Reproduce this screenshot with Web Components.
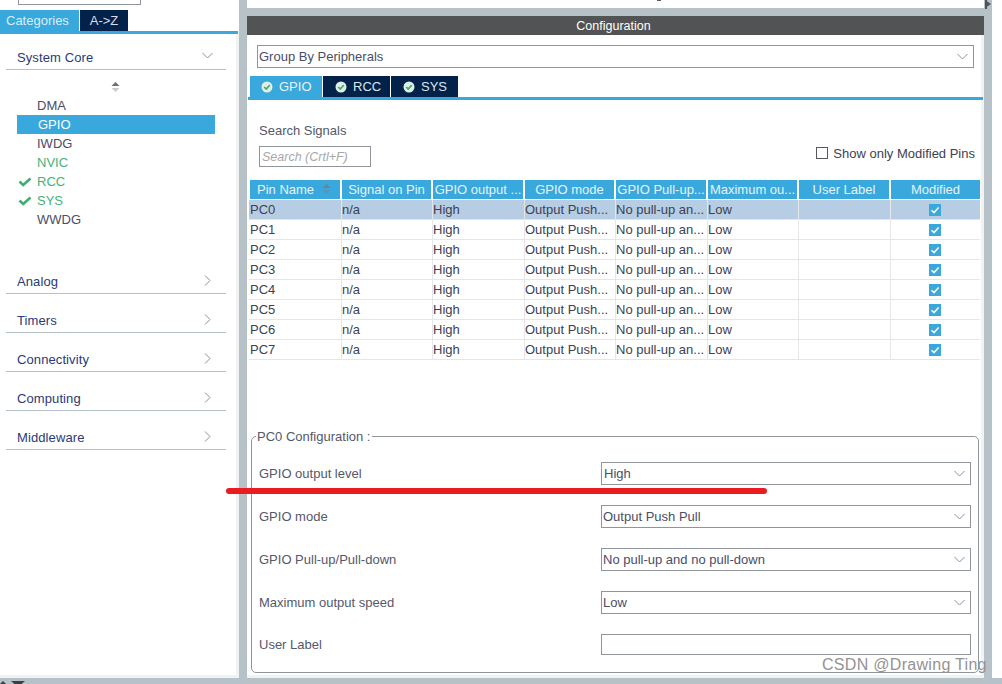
<!DOCTYPE html>
<html><head><meta charset="utf-8"><style>
html,body{margin:0;padding:0;background:#fff}
body{width:1002px;height:684px;overflow:hidden;font-family:"Liberation Sans",Arial,sans-serif}
</style></head><body>
<cube-app></cube-app>
<script>
const chev=(d,c='#8c8f92',s=15,sw=1)=>{
 const p={down:'M2.5 5 L7.5 10 L12.5 5',right:'M5 2.5 L10 7.5 L5 12.5'}[d];
 return `<svg width="${s}" height="${s}" viewBox="0 0 15 15" fill="none" stroke="${c}" stroke-width="${sw}"><path d="${p}"/></svg>`;
};
function def(name,css,html){
 customElements.define(name,class extends HTMLElement{
  connectedCallback(){
   if(this.shadowRoot)return;
   const r=this.attachShadow({mode:'open'});
   r.innerHTML=`<style>${css}</style>`+(typeof html==='function'?html(this):html);
  }
 });
}
def('cat-head',`:host{display:flex;align-items:center;justify-content:space-between;box-sizing:border-box;margin:0 10px 0 6px;height:39px;padding:14px 11px 0 11px;border-bottom:1px solid #b5c1c8;color:#2a3a78;font-size:13px;letter-spacing:.1px}
svg{margin-top:-2px;display:block}
:host([dir=down]) svg{margin-top:-3px}`,h=>`<span>${h.getAttribute('label')}</span>${chev(h.getAttribute('dir')||'right')}`);
def('cat-item',`:host{display:flex;align-items:center;box-sizing:border-box;height:19px;margin-left:17px;width:198px;font-size:13px;color:#4a4d68;padding-left:20px;position:relative}
:host([on]){background:#39a8dc;color:#fff;padding-left:21px}
:host([ok]){color:#45b27a}
svg{position:absolute;left:1px;top:5px}`,h=>`${h.hasAttribute('check')?'<svg width="14" height="10" viewBox="0 0 14 10" fill="none" stroke="#3fae73" stroke-width="2.6"><path d="M1.5 4.5 L5.2 8 L12.5 1.5"/></svg>':''}<span>${h.textContent}</span>`);
def('side-panel',`:host{display:block;width:239px;height:678px;background:#fff;box-sizing:border-box;flex:none}
.stub{box-sizing:border-box;width:123px;height:5px;margin-left:18px;border:1px solid #8f959a;border-top:0}
.tabs{display:flex;margin:5px 1px 0 0;height:21px;border-bottom:3px solid #39a8dc;gap:1px;align-items:stretch}
.t{display:flex;align-items:center;font-size:13px;color:#d8eef8;background:#39a8dc;width:79px;box-sizing:border-box;padding-left:6px}
.t.b{background:#022249;width:48px;padding:0;justify-content:center;color:#dde}
.body{display:flex;flex-direction:column;border-right:3px solid #f0f2f3;border-bottom:3px solid #f0f2f3;height:644px;box-sizing:border-box}
.sort{height:18px;margin-top:8px;display:flex;padding-left:111px;align-items:center}
.list{margin-bottom:26px}`,`<div class="stub"></div>
<div class="tabs"><div class="t">Categories</div><div class="t b">A-&gt;Z</div></div>
<div class="body">
<cat-head label="System Core" dir="down" style="height:36px;padding-top:11px"></cat-head>
<div class="sort"><svg width="9" height="12" viewBox="0 0 9 12"><path d="M4.5 1 L8.5 5 H.5Z" fill="#6d7072"/><path d="M4.5 11 L8.5 7 H.5Z" fill="#c9cccd"/></svg></div>
<div class="list">
<cat-item>DMA</cat-item><cat-item on>GPIO</cat-item><cat-item>IWDG</cat-item><cat-item ok>NVIC</cat-item><cat-item ok check>RCC</cat-item><cat-item ok check>SYS</cat-item><cat-item>WWDG</cat-item>
</div>
<cat-head label="Analog"></cat-head><cat-head label="Timers"></cat-head><cat-head label="Connectivity"></cat-head><cat-head label="Computing"></cat-head><cat-head label="Middleware"></cat-head>
</div>`);
def('mini-tab',`:host{display:flex;align-items:center;box-sizing:border-box;height:21px;background:#022249;color:#d9e6ee;font-size:13px;padding-left:12px;gap:6px}
:host([on]){background:#39a8dc;color:#e6f5fb;padding-left:11px}
svg{display:block}`,`<svg width="12" height="12" viewBox="0 0 12 12"><circle cx="6" cy="6" r="5.5" fill="#dff1e6"/><path d="M3.2 6 L5.2 8 L8.8 4.2" fill="none" stroke="#3fae73" stroke-width="1.7"/></svg><span><slot></slot></span>`);
def('drop-box',`:host{display:flex;align-items:center;justify-content:space-between;box-sizing:border-box;height:23px;border:1px solid #8f959a;background:#fff;font-size:13px;color:#4a4d68;padding:0 3px 0 1px}
svg{display:block}`,h=>`<span><slot></slot></span>${h.hasAttribute('plain')?'':chev('down','#8c8f92',15,1)}`);
const cols=[{w:93,t:'Pin Name'},{w:91,t:'Signal on Pin'},{w:92,t:'GPIO output ...'},{w:91,t:'GPIO mode'},{w:92,t:'GPIO Pull-up...'},{w:91,t:'Maximum ou...'},{w:92,t:'User Label'},{w:89,t:'Modified'}];
def('pin-table',`:host{display:block;width:731px;margin-left:2px;font-size:13px}
.r{display:grid;grid-template-columns:${cols.map(c=>c.w+'px').join(' ')};height:20px;box-sizing:border-box;border-bottom:1px solid #e4e7e9}
.h{border:0}
.h div{background:#39a8dc;color:#e4f4fb;display:flex;align-items:center;justify-content:center;height:19px;margin-right:2px;white-space:nowrap}
.h div:first-child{justify-content:flex-start;padding-left:7px;margin-left:1px}
.h div:last-child{margin-right:0}
.h svg{margin-left:8px;margin-top:-2px}
.c{color:#3d3f52;display:flex;align-items:center;border-right:1px solid #e4e7e9;white-space:nowrap;min-width:0}
.c:first-child{padding-left:1px}
.c:last-child{border-right:0}
.s{background:#b6cde3}
.m{justify-content:center;padding:0 1px 0 0}
.box{width:12px;height:12px;display:block}`,()=>{
 const hd=cols.map((c,i)=>`<div>${c.t}${i==0?'<svg width="9" height="12" viewBox="0 0 9 12"><path d="M4.5 1 L8.5 5 H.5Z" fill="#6f8290"/><path d="M4.5 11 L8.5 7 H.5Z" fill="#5796bc"/></svg>':''}</div>`).join('');
 let rows='';
 for(let i=0;i<8;i++){
  rows+=`<div class="r ${i==0?'s':''}"><div class="c">PC${i}</div><div class="c">n/a</div><div class="c">High</div><div class="c">Output Push...</div><div class="c">No pull-up an...</div><div class="c">Low</div><div class="c"></div><div class="c m"><svg class="box" viewBox="0 0 12 12"><rect width="12" height="12" fill="#39a8dc"/><path d="M2.5 6.2 L5 8.6 L9.6 3.4" fill="none" stroke="#fff" stroke-width="1.5"/></svg></div></div>`;
 }
 return `<div class="r h">${hd}</div>${rows}`;
});
def('field-row',`:host{display:grid;grid-template-columns:342px 370px;align-items:center;height:23px;font-size:13px;color:#55586a}`,`<span><slot name="l"></slot></span><slot name="f"></slot>`);
def('config-panel',`:host{display:flex;flex-direction:column;width:737px;height:662px;background:#fff;box-sizing:border-box;border-right:3px solid #f0f2f3;border-bottom:3px solid #f0f2f3}
.title{height:19px;background:#525354;color:#fff;font-size:12.5px;display:flex;align-items:center;justify-content:center;margin-right:-3px;padding-right:4px}
.grp{margin:10px 7px 0 10px;padding-left:1px}
.tabs{display:flex;gap:1px;margin-top:8px;height:21px;padding-left:3px}
.line{height:3px;background:#39a8dc;margin:0 -2px 0 1px}
.tabs mini-tab:nth-child(1){width:72px}.tabs mini-tab:nth-child(2){width:67px}.tabs mini-tab:nth-child(3){width:67px}
.sr{display:flex;justify-content:space-between;margin:23px 6px 0 12px;height:44px}
.lab{font-size:13px;color:#55586a;margin-bottom:7px;line-height:16px}
.inp{box-sizing:border-box;width:112px;height:21px;border:1px solid #8f959a;font:italic 12.5px "Liberation Sans",Arial,sans-serif;color:#a6a8ab;display:flex;align-items:center;padding-left:2px;white-space:nowrap}
.chk{display:flex;align-items:center;gap:5px;font-size:13px;color:#3d3f52;margin-top:22px;height:16px}
.chk i{width:10px;height:10px;border:1px solid #55585c;display:block}
.tw{margin-top:13px;flex:none}
.fs{box-sizing:border-box;margin:76px 0 0 4px;width:728px;height:237px;border:1px solid #8f959a;border-radius:5px;position:relative;display:flex;flex-direction:column;padding:25px 7px 0 7px;gap:20px}
.leg{position:absolute;left:4px;top:-8px;background:#fff;padding:0 2px 0 1px;font-size:13px;line-height:16px;color:#55586a}`,`<div class="title">Configuration</div>
<drop-box class="grp">Group By Peripherals</drop-box>
<div class="tabs"><mini-tab on>GPIO</mini-tab><mini-tab>RCC</mini-tab><mini-tab>SYS</mini-tab></div>
<div class="line"></div>
<div class="sr"><div><div class="lab">Search Signals</div><div class="inp">Search (Crtl+F)</div></div><div class="chk"><i></i>Show only Modified Pins</div></div>
<div class="tw"><pin-table></pin-table></div>
<div class="fs"><div class="leg">PC0 Configuration :</div>
<field-row><span slot="l">GPIO output level</span><drop-box slot="f" style="padding-left:2px">High</drop-box></field-row>
<field-row><span slot="l">GPIO mode</span><drop-box slot="f">Output Push Pull</drop-box></field-row>
<field-row><span slot="l">GPIO Pull-up/Pull-down</span><drop-box slot="f">No pull-up and no pull-down</drop-box></field-row>
<field-row><span slot="l">Maximum output speed</span><drop-box slot="f">Low</drop-box></field-row>
<field-row style="height:21px"><span slot="l">User Label</span><drop-box slot="f" plain style="height:21px"></drop-box></field-row>
</div>`);
def('cube-app',`:host{display:block;width:1002px;height:684px;background:#b6c1c8;position:relative;overflow:hidden}
.main{display:flex;height:678px;align-items:flex-start}
.col{margin-left:8px;flex:none}
.top{width:737px;height:8px;background:#fff;margin-bottom:8px}
.fill{flex:1;height:678px;background:#fff;margin-left:8px}
.red{position:absolute;left:226px;top:488px;width:541px;height:6px;background:#ea1c20;border-radius:3px}
.wm{position:absolute;left:822px;top:656px;font-size:16px;color:#939393;white-space:nowrap;letter-spacing:.3px}
.arr{position:absolute;left:11px;top:681px;width:0;height:0;border-left:7px solid transparent;border-right:7px solid transparent;border-top:6px solid #3c4043}
.arr2{position:absolute;left:0;top:681px;width:0;height:0;border-left:3px solid transparent;border-right:3px solid transparent;border-bottom:3px solid #3c4043}
.tri{position:absolute;left:985px;top:0;width:0;height:0;border-top:4.5px solid transparent;border-bottom:4.5px solid transparent;border-left:6px solid #525354}
.tri::before{content:"";position:absolute;left:-6px;top:-4.5px;width:2px;height:9px;background:#525354}
.bit{position:absolute;left:657px;top:0;width:4px;height:1px;background:#55586a}`,`<div class="main"><side-panel></side-panel><div class="col"><div class="top"></div><config-panel></config-panel></div><div class="fill"></div></div>
<div class="red"></div><div class="wm">CSDN @Drawing Ting</div><div class="arr"></div><div class="arr2"></div><div class="tri"></div><div class="bit"></div>`);
</script></body></html>
